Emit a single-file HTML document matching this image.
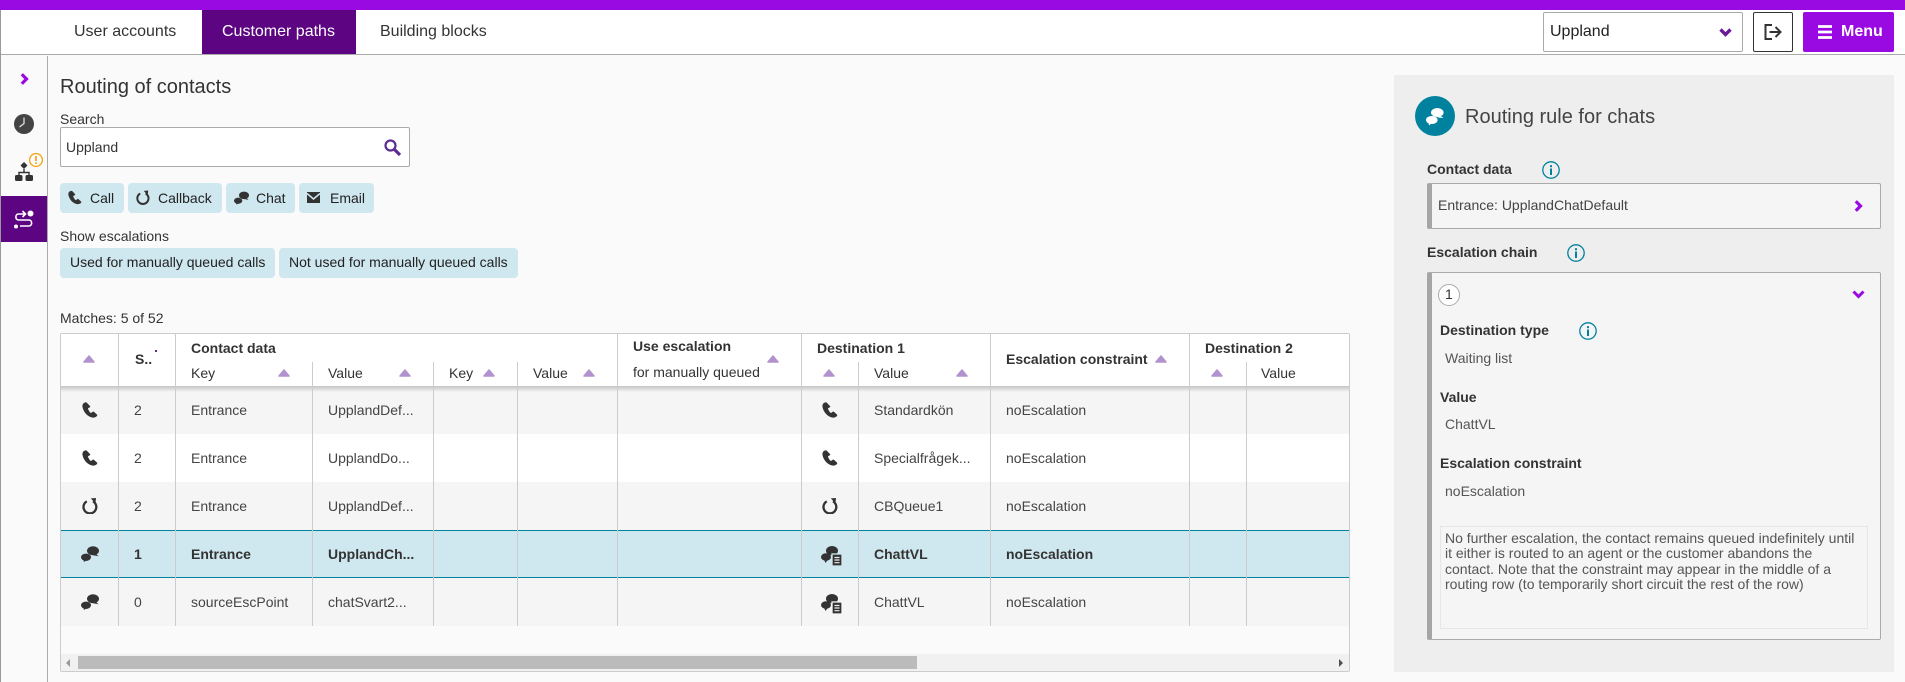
<!DOCTYPE html>
<html lang="en"><head><meta charset="utf-8"><title>Routing of contacts</title>
<style>
html,body{margin:0;padding:0;width:1905px;height:682px;overflow:hidden;background:#fafafa;font-family:"Liberation Sans",Arial,sans-serif;color:#333}
.a{position:absolute;box-sizing:border-box}
.t{position:absolute;white-space:nowrap;line-height:20px;font-size:14px;color:#333}
.b{font-weight:bold}
.g{color:#555}
.r{color:#444}
.pill{position:absolute;box-sizing:border-box;background:#cfe7ee;border-radius:4px}
.vl{position:absolute;width:1px;background:#ccc}
svg{position:absolute;overflow:visible}
.arr{position:absolute;width:12px;height:8px}
</style></head><body>
<svg width="0" height="0" style="position:absolute"><defs>
<symbol id="phone" viewBox="0 0 16 16"><path fill="#333" d="M3 .5C1 1 0 3 .6 5.500c1.200 5 5 9 9.500 10 2 .4 4-.3 5-1.800.3-.5.2-.9-.2-1.200l-3-2.700c-.4-.3-.8-.3-1.200 0l-1.300 1c-.3.2-.6.2-.9 0-1-.9-2-2.600-2.500-4-.1-.3 0-.6.3-.7l1.500-.8c.4-.2.5-.6.4-1L5.300 1.200C4.900.5 4 .2 3 .5z"/></symbol>
<symbol id="cb" viewBox="0 0 16 16"><path fill="none" stroke="#333" stroke-width="2.300" d="M4.800 3.400A6.400 6.400 0 1 0 11 3.400"/><path fill="#333" d="M8.800 .4L14 0 13.400 5.400z"/></symbol>
<symbol id="chat" viewBox="0 0 18 16"><ellipse cx="12" cy="4.800" rx="6" ry="4.500" fill="#333"/><path fill="#333" d="M15 8l2.600 2.200-5.600-1z"/><ellipse cx="5" cy="11.300" rx="5" ry="3.700" fill="#333"/><path fill="#333" d="M2.500 13.500l.4 2.500 3-2z"/></symbol>
<symbol id="chatl" viewBox="0 0 21 20"><ellipse cx="11" cy="4.700" rx="6" ry="4.700" fill="#333"/><ellipse cx="5" cy="11" rx="5" ry="3.800" fill="#333"/><path fill="#333" d="M3 13.500l1.500 3.500 2.500-3.500z"/><rect x="11" y="8" width="10" height="12" fill="#333" stroke="currentColor" stroke-width="1.300"/><path stroke="#eee" stroke-width="1.200" d="M13.500 11.500h5M13.500 14h5M13.500 16.700h5"/></symbol>
<symbol id="up" viewBox="0 0 12 8"><path fill="#b192cf" stroke="#b192cf" stroke-linejoin="round" stroke-width="1.500" d="M6 1L11 7H1z"/></symbol>
<symbol id="info" viewBox="0 0 18 18"><circle cx="9" cy="9" r="8.200" fill="none" stroke="#00829f" stroke-width="1.300"/><rect x="8" y="7.500" width="2" height="6.500" fill="#00829f"/><rect x="8" y="4.200" width="2" height="2" fill="#00829f"/></symbol>
<symbol id="chev" viewBox="0 0 9 12"><path fill="none" stroke="#990ae3" stroke-width="3.200" d="M1.800 1.200L6.500 6 1.800 10.800"/></symbol>
</defs></svg>

<!-- top -->
<div class="a" style="left:0;top:0;width:1905px;height:10px;background:#990ae3"></div>
<div class="a" style="left:0;top:10px;width:1905px;height:45px;background:#fff;border-bottom:1px solid #aaa"></div>
<div class="a" style="left:0;top:10px;width:1px;height:672px;background:#999"></div>
<div class="a" style="left:202px;top:10px;width:154px;height:44px;background:#5c0482"></div>
<div class="t" style="left:74px;top:22px;font-size:16px">User accounts</div>
<div class="t" style="left:222px;top:22px;font-size:16px;color:#fff">Customer paths</div>
<div class="t" style="left:380px;top:22px;font-size:16px">Building blocks</div>

<div class="a" style="left:1543px;top:12px;width:200px;height:40px;background:#fff;border:1px solid #aaa;border-radius:2px"></div>
<div class="t" style="left:1550px;top:22px;font-size:16px;color:#222">Uppland</div>
<svg style="left:1719px;top:28px" width="13" height="9"><path fill="none" stroke="#6a1b9a" stroke-width="3.400" d="M1.500 1.500L6.500 6.500 11.500 1.500"/></svg>
<div class="a" style="left:1753px;top:12px;width:40px;height:40px;background:#fff;border:1px solid #333;border-radius:2px"></div>
<svg style="left:1764px;top:24px" width="18" height="16"><path fill="none" stroke="#333" stroke-width="2" d="M8 1H1.500v14H8M5.500 8H16M11.500 3l5 5-5 5"/></svg>
<div class="a" style="left:1803px;top:12px;width:91px;height:40px;background:#990ae3;border-radius:2px"></div>
<svg style="left:1818px;top:25px" width="14" height="14"><path stroke="#fff" stroke-width="2.800" d="M0 1.500h14M0 7h14M0 12.500h14"/></svg>
<div class="t b" style="left:1841px;top:22px;font-size:16px;color:#fff">Menu</div>

<!-- sidebar -->
<div class="a" style="left:47px;top:56px;width:1px;height:626px;background:#aaa"></div>
<svg style="left:20px;top:73px" width="9" height="12"><use href="#chev" width="9" height="12"/></svg>
<svg style="left:14px;top:114px" width="20" height="20"><circle cx="10" cy="10" r="10" fill="#444"/><path fill="none" stroke="#ddd" stroke-width="1.300" d="M10 3.500v6L5.500 13"/></svg>
<svg style="left:15px;top:162px" width="18" height="19"><path fill="#333" d="M9 0l3.500 3.500L9 7 5.500 3.500z"/><path fill="none" stroke="#333" stroke-width="1.400" d="M9 7v3.500M4 14v-3.500h10V14"/><rect x="0" y="13" width="7.500" height="6" rx="1.500" fill="#333"/><rect x="10.500" y="13" width="7.500" height="6" rx="1.500" fill="#333"/></svg>
<svg style="left:29px;top:153px" width="14" height="14"><circle cx="7" cy="7" r="6.400" fill="#fff" stroke="#f5a623" stroke-width="1.400"/><path stroke="#f5a623" stroke-width="1.800" d="M7 3v5M7 9.300v1.700"/></svg>
<div class="a" style="left:1px;top:196px;width:46px;height:46px;background:#5c0482"></div>
<svg style="left:14px;top:210px" width="20" height="19"><circle cx="16.500" cy="3.500" r="3" fill="#fff"/><circle cx="2" cy="16.500" r="2" fill="#fff"/><path fill="none" stroke="#fff" stroke-width="1.600" d="M11 4H4.500C1 4 1 10 4.500 10H15c3.500 0 3.500 6 0 6H6M8.500 1l3 3-3 3"/></svg>

<!-- left content -->
<div class="t" style="left:60px;top:77px;font-size:20px">Routing of contacts</div>
<div class="t" style="left:60px;top:109px">Search</div>
<div class="a" style="left:60px;top:127px;width:350px;height:40px;background:#fff;border:1px solid #aaa;border-radius:2px"></div>
<div class="t" style="left:66px;top:137px;">Uppland</div>
<svg style="left:384px;top:139px" width="17" height="17"><circle cx="6.500" cy="6.500" r="5" fill="none" stroke="#5c2d91" stroke-width="2.200"/><path stroke="#5c2d91" stroke-width="3.200" d="M10 10l6 6"/></svg>

<div class="pill" style="left:60px;top:183px;width:64px;height:30px"></div>
<div class="pill" style="left:128px;top:183px;width:94px;height:30px"></div>
<div class="pill" style="left:226px;top:183px;width:69px;height:30px"></div>
<div class="pill" style="left:299px;top:183px;width:75px;height:30px"></div>
<svg style="left:68px;top:190px" width="14" height="15"><use href="#phone" width="14" height="15"/></svg>
<svg style="left:136px;top:190px" width="14" height="15"><use href="#cb" width="14" height="15"/></svg>
<svg style="left:234px;top:191px" width="15" height="14"><use href="#chat" width="15" height="14"/></svg>
<svg style="left:307px;top:192px" width="13" height="11"><path fill="#333" d="M0 0h13v11H0z"/><path fill="none" stroke="#cfe7ee" stroke-width="1.500" d="M0 1.500L6.500 7 13 1.500"/></svg>
<div class="t" style="left:90px;top:188px;color:#222">Call</div>
<div class="t" style="left:158px;top:188px;color:#222">Callback</div>
<div class="t" style="left:256px;top:188px;color:#222">Chat</div>
<div class="t" style="left:330px;top:188px;color:#222">Email</div>

<div class="t" style="left:60px;top:226px">Show escalations</div>
<div class="pill" style="left:60px;top:248px;width:215px;height:30px"></div>
<div class="pill" style="left:279px;top:248px;width:239px;height:30px"></div>
<div class="t" style="left:70px;top:252px;color:#222">Used for manually queued calls</div>
<div class="t" style="left:289px;top:252px;color:#222">Not used for manually queued calls</div>
<div class="t" style="left:60px;top:308px">Matches: 5 of 52</div>

<!-- table -->
<div class="a" style="left:60px;top:333px;width:1290px;height:339px;border:1px solid #ccc;border-radius:2px;background:#fafafa"></div>
<div class="a" style="left:61px;top:334px;width:1288px;height:52px;background:#fff"></div>
<div class="a" style="left:61px;top:386px;width:1288px;height:48px;background:#f5f5f5"></div>
<div class="a" style="left:61px;top:434px;width:1288px;height:48px;background:#fff"></div>
<div class="a" style="left:61px;top:482px;width:1288px;height:48px;background:#f5f5f5"></div>
<div class="a" style="left:61px;top:530px;width:1288px;height:48px;background:#cfe7ee;border-top:1px solid #00829f;border-bottom:1px solid #00829f"></div>
<div class="a" style="left:61px;top:578px;width:1288px;height:48px;background:#f5f5f5"></div>
<div class="a" style="left:61px;top:386px;width:1288px;height:6px;background:linear-gradient(#c4c4c4,rgba(200,200,200,0))"></div>

<div class="vl" style="left:118px;top:334px;height:292px"></div>
<div class="vl" style="left:175px;top:334px;height:292px"></div>
<div class="vl" style="left:312px;top:362px;height:264px"></div>
<div class="vl" style="left:433px;top:362px;height:264px"></div>
<div class="vl" style="left:517px;top:362px;height:264px"></div>
<div class="vl" style="left:617px;top:334px;height:292px"></div>
<div class="vl" style="left:801px;top:334px;height:292px"></div>
<div class="vl" style="left:858px;top:362px;height:264px"></div>
<div class="vl" style="left:990px;top:334px;height:292px"></div>
<div class="vl" style="left:1189px;top:334px;height:292px"></div>
<div class="vl" style="left:1246px;top:362px;height:264px"></div>

<div class="t b" style="left:135px;top:349px">S..</div>
<div class="a" style="left:155px;top:350px;width:2px;height:2px;background:#5c2d91"></div>
<div class="t b" style="left:191px;top:338px">Contact data</div>
<div class="t" style="left:191px;top:363px">Key</div>
<div class="t" style="left:328px;top:363px">Value</div>
<div class="t" style="left:449px;top:363px">Key</div>
<div class="t" style="left:533px;top:363px">Value</div>
<div class="t b" style="left:633px;top:336px">Use escalation</div>
<div class="t" style="left:633px;top:362px">for manually queued</div>
<div class="t b" style="left:817px;top:338px">Destination 1</div>
<div class="t" style="left:874px;top:363px">Value</div>
<div class="t b" style="left:1006px;top:349px">Escalation constraint</div>
<div class="t b" style="left:1205px;top:338px">Destination 2</div>
<div class="t" style="left:1261px;top:363px">Value</div>

<svg class="arr" style="left:83px;top:355px"><use href="#up" width="12" height="8"/></svg>
<svg class="arr" style="left:278px;top:369px"><use href="#up" width="12" height="8"/></svg>
<svg class="arr" style="left:399px;top:369px"><use href="#up" width="12" height="8"/></svg>
<svg class="arr" style="left:483px;top:369px"><use href="#up" width="12" height="8"/></svg>
<svg class="arr" style="left:583px;top:369px"><use href="#up" width="12" height="8"/></svg>
<svg class="arr" style="left:767px;top:355px"><use href="#up" width="12" height="8"/></svg>
<svg class="arr" style="left:823px;top:369px"><use href="#up" width="12" height="8"/></svg>
<svg class="arr" style="left:956px;top:369px"><use href="#up" width="12" height="8"/></svg>
<svg class="arr" style="left:1155px;top:355px"><use href="#up" width="12" height="8"/></svg>
<svg class="arr" style="left:1211px;top:369px"><use href="#up" width="12" height="8"/></svg>

<!-- row icons -->
<svg style="left:82px;top:402px" width="16" height="16"><use href="#phone" width="16" height="16"/></svg>
<svg style="left:82px;top:450px" width="16" height="16"><use href="#phone" width="16" height="16"/></svg>
<svg style="left:82px;top:498px" width="16" height="16"><use href="#cb" width="16" height="16"/></svg>
<svg style="left:81px;top:546px" width="18" height="16"><use href="#chat" width="18" height="16"/></svg>
<svg style="left:81px;top:594px" width="18" height="16"><use href="#chat" width="18" height="16"/></svg>
<svg style="left:822px;top:402px" width="16" height="16"><use href="#phone" width="16" height="16"/></svg>
<svg style="left:822px;top:450px" width="16" height="16"><use href="#phone" width="16" height="16"/></svg>
<svg style="left:822px;top:498px" width="16" height="16"><use href="#cb" width="16" height="16"/></svg>
<svg style="left:821px;top:546px;color:#cfe7ee" width="21" height="20"><use href="#chatl" width="21" height="20"/></svg>
<svg style="left:821px;top:594px;color:#f5f5f5" width="21" height="20"><use href="#chatl" width="21" height="20"/></svg>

<!-- rows text -->
<div class="t r" style="left:134px;top:400px">2</div><div class="t r" style="left:191px;top:400px">Entrance</div><div class="t r" style="left:328px;top:400px">UpplandDef...</div><div class="t r" style="left:874px;top:400px">Standardkön</div><div class="t r" style="left:1006px;top:400px">noEscalation</div>
<div class="t r" style="left:134px;top:448px">2</div><div class="t r" style="left:191px;top:448px">Entrance</div><div class="t r" style="left:328px;top:448px">UpplandDo...</div><div class="t r" style="left:874px;top:448px">Specialfrågek...</div><div class="t r" style="left:1006px;top:448px">noEscalation</div>
<div class="t r" style="left:134px;top:496px">2</div><div class="t r" style="left:191px;top:496px">Entrance</div><div class="t r" style="left:328px;top:496px">UpplandDef...</div><div class="t r" style="left:874px;top:496px">CBQueue1</div><div class="t r" style="left:1006px;top:496px">noEscalation</div>
<div class="t b" style="left:134px;top:544px">1</div><div class="t b" style="left:191px;top:544px">Entrance</div><div class="t b" style="left:328px;top:544px">UpplandCh...</div><div class="t b" style="left:874px;top:544px">ChattVL</div><div class="t b" style="left:1006px;top:544px">noEscalation</div>
<div class="t r" style="left:134px;top:592px">0</div><div class="t r" style="left:191px;top:592px">sourceEscPoint</div><div class="t r" style="left:328px;top:592px">chatSvart2...</div><div class="t r" style="left:874px;top:592px">ChattVL</div><div class="t r" style="left:1006px;top:592px">noEscalation</div>

<!-- scrollbar -->
<div class="a" style="left:61px;top:654px;width:1288px;height:17px;background:#f1f1f1"></div>
<div class="a" style="left:78px;top:656px;width:839px;height:13px;background:#bbb"></div>
<svg style="left:66px;top:659px" width="5" height="8"><path fill="#999" d="M4 0v8L0 4z"/></svg>
<svg style="left:1339px;top:659px" width="5" height="8"><path fill="#505050" d="M0 0v8l4-4z"/></svg>

<!-- right panel -->
<div class="a" style="left:1394px;top:75px;width:500px;height:597px;background:#eee"></div>
<svg style="left:1415px;top:96px" width="40" height="40"><circle cx="20" cy="20" r="20" fill="#00829f"/><ellipse cx="22.300" cy="16.500" rx="6.300" ry="4.500" fill="#fff"/><path fill="#fff" d="M25 19.500l3.500 2.500-6-.5z"/><ellipse cx="16.800" cy="24" rx="5.800" ry="4" fill="#fff"/><path fill="#fff" d="M13.500 26.500l.5 3 3-2.500z"/></svg>
<div class="t" style="left:1465px;top:107px;font-size:20px;color:#444">Routing rule for chats</div>

<div class="t b" style="left:1427px;top:159px">Contact data</div>
<svg style="left:1542px;top:161px" width="18" height="18"><use href="#info" width="18" height="18"/></svg>
<div class="a" style="left:1427px;top:183px;width:454px;height:46px;background:#f5f5f5;border:1px solid #aaa;border-left:5px solid #a5a5a5;border-radius:2px"></div>
<div class="t" style="left:1438px;top:195px;color:#444">Entrance: UpplandChatDefault</div>
<svg style="left:1854px;top:200px" width="9" height="12"><use href="#chev" width="9" height="12"/></svg>

<div class="t b" style="left:1427px;top:242px">Escalation chain</div>
<svg style="left:1567px;top:244px" width="18" height="18"><use href="#info" width="18" height="18"/></svg>
<div class="a" style="left:1427px;top:272px;width:454px;height:368px;background:#f5f5f5;border:1px solid #aaa;border-left:5px solid #a5a5a5;border-radius:2px"></div>
<svg style="left:1438px;top:284px" width="22" height="22"><circle cx="11" cy="11" r="10.500" fill="#fff" stroke="#aaa"/></svg>
<div class="t" style="left:1445px;top:284px;color:#333">1</div>
<svg style="left:1852px;top:290px" width="13" height="10"><path fill="none" stroke="#990ae3" stroke-width="3" d="M1.500 1.500L6.500 6.500 11.500 1.500"/></svg>

<div class="t b" style="left:1440px;top:320px">Destination type</div>
<svg style="left:1579px;top:322px" width="18" height="18"><use href="#info" width="18" height="18"/></svg>
<div class="t g" style="left:1445px;top:348px">Waiting list</div>
<div class="t b" style="left:1440px;top:387px">Value</div>
<div class="t g" style="left:1445px;top:414px">ChattVL</div>
<div class="t b" style="left:1440px;top:453px">Escalation constraint</div>
<div class="t g" style="left:1445px;top:481px">noEscalation</div>

<div class="a" style="left:1440px;top:526px;width:428px;height:103px;border:1px solid #e6e6e6"></div>
<div class="a g" style="left:1445px;top:531px;width:420px;font-size:14px;line-height:15.400px">No further escalation, the contact remains queued indefinitely until<br>it either is routed to an agent or the customer abandons the<br>contact. Note that the constraint may appear in the middle of a<br>routing row (to temporarily short circuit the rest of the row)</div>
</body></html>
